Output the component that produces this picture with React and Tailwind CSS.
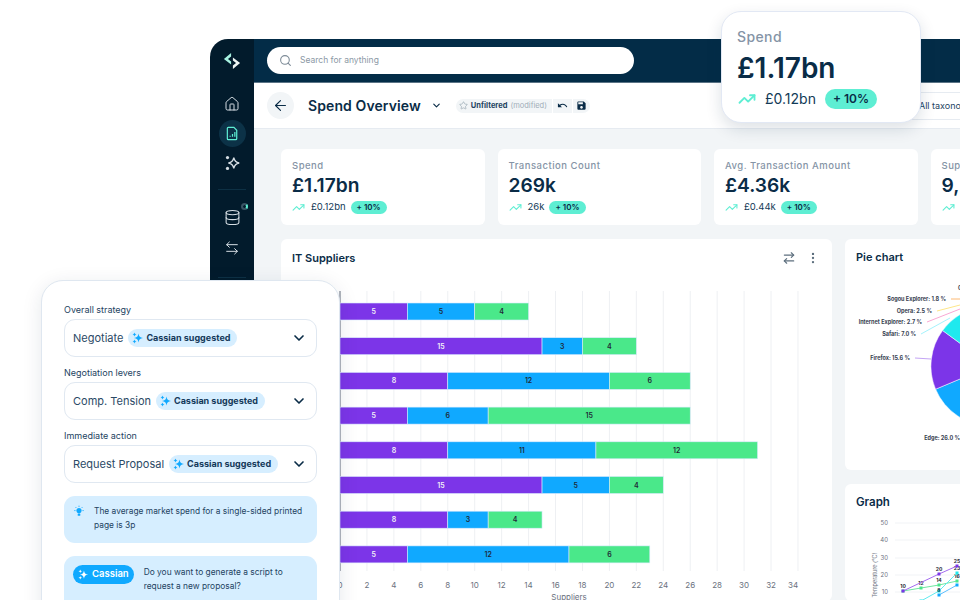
import {
    ArrowLeft,
    ArrowLeftRight,
    ArrowRightLeft,
    ChevronDown,
    Database,
    EllipsisVertical,
    House,
    Search,
    Star,
    TrendingUp,
} from "lucide-react";
import { MdSave, MdUndo } from "react-icons/md";

const stats = [
    { label: "Transaction Count", value: "269k", delta: "26k" },
    { label: "Avg. Transaction Amount", value: "£4.36k", delta: "£0.44k" },
    { label: "Suppliers", value: "9,241", delta: "1.2k" },
];

const bars = [
    [5, 5, 4],
    [15, 3, 4],
    [8, 12, 6],
    [5, 6, 15],
    [8, 11, 12],
    [15, 5, 4],
    [8, 3, 4],
    [5, 12, 6],
];

const barColors = ["#7c35e8", "#10a9ff", "#4ae88a"];
const ticks = [0, 2, 4, 6, 8, 10, 12, 14, 16, 18, 20, 22, 24, 26, 28, 30, 32, 34];

function Sparkles({ className }) {
    return (
        <svg viewBox="0 0 24 24" className={className} fill="currentColor">
            <path d="M13 3c1 6 3 8 9 9-6 1-8 3-9 9-1-6-3-8-9-9 6-1 8-3 9-9z" />
            <path d="M5 1c.6 2.400 1.600 3.400 4 4-2.400.6-3.400 1.600-4 4-.6-2.400-1.600-3.400-4-4 2.400-.6 3.400-1.600 4-4z" />
            <path d="M5 15c.6 2.400 1.600 3.400 4 4-2.400.6-3.400 1.600-4 4-.6-2.400-1.600-3.400-4-4 2.400-.6 3.400-1.600 4-4z" />
        </svg>
    );
}

function OutlineSparkles() {
    return (
        <svg viewBox="0 0 20 20" className="h-[18px] w-[18px] text-[#d5dde3]" fill="currentColor">
            <path
                d="M12 4c.7 4 2 5.300 6 6-4 .7-5.300 2-6 6-.7-4-2-5.300-6-6 4-.7 5.300-2 6-6z"
                fill="none"
                stroke="currentColor"
                strokeWidth="1.500"
            />
            <circle cx="5" cy="4" r="1.800" />
            <circle cx="5" cy="16" r="1.800" />
        </svg>
    );
}

function Logo() {
    return (
        <svg viewBox="0 0 20 20" className="h-[18px] w-[18px]">
            <path d="M9 1v4L5.500 7.800 9 10.500V14L1 7.800z" fill="#a7f3e2" />
            <path d="M11 6l8 6.200-8 6.800v-4l3.500-2.800L11 9.500z" fill="#eef6f4" />
        </svg>
    );
}

function Bulb() {
    return (
        <svg viewBox="0 0 14 14" className="mt-[1px] h-[12px] w-[12px] shrink-0" fill="#10a9ff">
            <circle cx="7" cy="6.500" r="3" />
            <rect x="5.500" y="10" width="3" height="2.500" rx="0.600" />
            <path d="M7 .8v1.400M1.500 6.500h1.400M11.100 6.500h1.400M3 2.500l1 1M11 2.500l-1 1" stroke="#10a9ff" strokeWidth="1" />
        </svg>
    );
}

function StatCard({ label, value, delta }) {
    return (
        <div className="h-[76px] w-[203.5px] shrink-0 rounded-md bg-white px-[11px] pt-[10px]">
            <div className="text-[9.500px] leading-[13px] font-medium tracking-[0.5px] text-[#8594a6]">
                {label}
            </div>
            <div className="text-[19.200px] leading-[27px] font-semibold text-[#0a2c47]">
                {value}
            </div>
            <div className="mt-[1px] flex items-center">
                <TrendingUp className="h-[13px] w-[13px] text-[#5eeed3]" />
                <span className="ml-[6px] text-[9.500px] text-[#123a57]">{delta}</span>
                <span className="ml-[5px] rounded-full bg-[#5eeed3] px-[6px] text-[8px] leading-[13px] font-semibold text-[#0a2c47]">
                    + 10%
                </span>
            </div>
        </div>
    );
}

function Suggested() {
    return (
        <span className="ml-[5px] flex h-[18px] items-center rounded-full bg-[#d6eeff] pl-[4px] pr-[7px]">
            <Sparkles className="h-[12px] w-[12px] text-[#10a9ff]" />
            <span className="ml-[2px] text-[9px] font-bold text-[#14395a]">Cassian suggested</span>
        </span>
    );
}

function Select({ label, value }) {
    return (
        <div className="mb-[9px]">
            <div className="text-[9px] leading-[13px] text-[#23435f]">{label}</div>
            <div className="mt-[3px] flex h-[38px] items-center rounded-[11px] border border-[#e0e8f1] pl-[8px] pr-[9px]">
                <span className="text-[11px] text-[#2b4a66]">{value}</span>
                <Suggested />
                <ChevronDown className="ml-auto h-[16px] w-[16px] text-[#0a2c47]" strokeWidth={2.5} />
            </div>
        </div>
    );
}

function BarChart() {
    return (
        <svg viewBox="281 285 551 315" className="h-[315px] w-[551px]">
            {ticks.map((t) => (
                <line
                    key={t}
                    x1={340 + t * 13.47}
                    x2={340 + t * 13.47}
                    y1="290"
                    y2="570"
                    stroke="#eef0f3"
                />
            ))}
            <line x1="340" x2="340" y1="290" y2="570" stroke="#6b7280" />
            {bars.map((row, i) => {
                let start = 0;
                const y = 302 + i * 34.7;
                return row.map((v, j) => {
                    const x = 340 + start * 13.47;
                    start += v;
                    return (
                        <g key={j}>
                            <rect
                                x={x}
                                y={y}
                                width={v * 13.47}
                                height="17"
                                fill={barColors[j]}
                                stroke="#dbeafe"
                                strokeWidth="0.6"
                            />
                            <text
                                x={x + (v * 13.47) / 2}
                                y={y + 11}
                                textAnchor="middle"
                                fontSize="7"
                                fontWeight="600"
                                fill={j === 0 ? "#f3f4f6" : "#1f2937"}
                            >
                                {v}
                            </text>
                        </g>
                    );
                });
            })}
            {ticks.map((t) => (
                <text
                    key={t}
                    x={t === 34 ? 793 : 340 + t * 13.47}
                    y="587"
                    textAnchor="middle"
                    fontSize="8"
                    fill="#6b7280"
                >
                    {t}
                </text>
            ))}
            <text x="569" y="599" textAnchor="middle" fontSize="8" fill="#6b7280">
                Suppliers
            </text>
        </svg>
    );
}

function PieChart() {
    const labels = [
        ["Sogou Explorer: 1.8 %", 946, 300],
        ["Opera: 2.5 %", 932, 312],
        ["Internet Explorer: 2.7 %", 922, 323],
        ["Safari: 7.0 %", 916, 335],
        ["Firefox: 15.6 %", 910, 359],
        ["Edge: 26.0 %", 960, 439],
    ];
    return (
        <svg viewBox="845 270 300 199" className="h-[199px] w-[300px]">
            <path d="M991 365 L991 425 A60 60 0 0 1 935.600 388.200 Z" fill="#10a9ff" stroke="#fff" strokeWidth="0.5" />
            <path d="M991 365 L935.600 388.200 A60 60 0 0 1 942.600 329.500 Z" fill="#7c35e8" stroke="#fff" strokeWidth="0.5" />
            <path d="M991 365 L942.600 329.500 A60 60 0 0 1 991 305 Z" fill="#1fe9ee" stroke="#fff" strokeWidth="0.5" />
            <path d="M951 298 H960" stroke="#fdba74" fill="none" />
            <path d="M937 310 L960 304" stroke="#fde68a" fill="none" />
            <path d="M927 321 L960 308" stroke="#f9a8d4" fill="none" />
            <path d="M921 333 L950 317" stroke="#a5f3fc" fill="none" />
            <path d="M915 357 L931 358" stroke="#c4a5f5" fill="none" />
            {labels.map(([text, x, y]) => (
                <text key={text} x={x} y={y} textAnchor="end" fontSize="5.500" fontWeight="700" fill="#374151">
                    {text}
                </text>
            ))}
            <text x="958" y="289" fontSize="5.500" fontWeight="700" fill="#374151">
                Other
            </text>
        </svg>
    );
}

function LineChart() {
    const series = [
        { color: "#6ee7a0", fill: "#4ae88a", points: [[903, 590], [921, 587, 12], [939, 584, 14], [957, 580, 16]] },
        { color: "#5eeaf0", fill: "#1fe9ee", points: [[921, 600], [939, 590], [957, 572, 23]] },
        { color: "#5cc0ff", fill: "#10a9ff", points: [[939, 594, 8], [957, 584]] },
        { color: "#a46cf0", fill: "#7c35e8", points: [[903, 590, 10], [939, 573, 20], [957, 565, 25]] },
    ];
    return (
        <svg viewBox="845 515 300 85" className="h-[85px] w-[300px]">
            {[
                ["50", 522],
                ["40", 539],
                ["30", 557],
                ["20", 574],
                ["10", 591],
            ].map(([label, y]) => (
                <g key={label}>
                    <line x1="895" x2="1100" y1={y} y2={y} stroke="#f1f3f6" />
                    <text x="888" y={y + 2} textAnchor="end" fontSize="6" fill="#6b7280">
                        {label}
                    </text>
                </g>
            ))}
            <text
                transform="translate(877 574) rotate(-90)"
                textAnchor="middle"
                fontSize="5.500"
                fill="#6b7280"
            >
                Temperature (°C)
            </text>
            {series.map((s) => (
                <g key={s.fill}>
                    <polyline
                        points={s.points.map((p) => `${p[0]},${p[1]}`).join(" ")}
                        fill="none"
                        stroke={s.color}
                        strokeWidth="1"
                    />
                    {s.points.map((p) => (
                        <g key={p[0]}>
                            <rect x={p[0] - 1.5} y={p[1] - 1.5} width="3" height="3" fill={s.fill} />
                            {p[2] && (
                                <text x={p[0]} y={p[1] - 3.500} textAnchor="middle" fontSize="5" fontWeight="700" fill="#1f2937">
                                    {p[2]}
                                </text>
                            )}
                        </g>
                    ))}
                </g>
            ))}
        </svg>
    );
}

export default function App() {
    return (
        <div className="relative h-[600px] w-[960px] overflow-hidden bg-white font-['Inter',sans-serif]">
            {/* DASHBOARD WINDOW */}
            <div className="absolute top-[39px] left-[210px] flex h-[620px] w-[1050px] overflow-hidden rounded-tl-[18px]">
                <aside className="flex w-[44px] shrink-0 flex-col items-center bg-[#021b2c] pt-[13px] text-[#d5dde3]">
                    <Logo />
                    <House className="mt-[26px] h-[16px] w-[16px]" strokeWidth={1.5} />
                    <div className="mt-[8px] flex h-[27px] w-[27px] items-center justify-center rounded-full bg-[#0c3247]">
                        <svg viewBox="0 0 16 16" className="h-[15px] w-[15px]" fill="none" stroke="#5eeed3" strokeWidth="1.300">
                            <path d="M3.500 1.500h6l3 3v9a1 1 0 0 1-1 1h-8a1 1 0 0 1-1-1v-11a1 1 0 0 1 1-1z" />
                            <path d="M5.500 11.500v-1M8 11.500v-3M10.500 11.500v-5" />
                        </svg>
                    </div>
                    <div className="mt-[7px]">
                        <OutlineSparkles />
                    </div>
                    <div className="mt-[17px] h-px w-[28px] bg-[#0d3044]" />
                    <div className="relative mt-[19px]">
                        <Database className="h-[17px] w-[17px]" strokeWidth={1.5} />
                        <span className="absolute -top-[6px] -right-[7px] h-[7px] w-[7px] rounded-full border-2 border-[#3a5565] border-r-[#5eeed3]" />
                    </div>
                    <ArrowLeftRight className="mt-[14px] h-[16px] w-[16px]" strokeWidth={1.5} />
                    <div className="mt-[21px] h-px w-[28px] bg-[#0d3044]" />
                </aside>

                <main className="flex min-w-0 flex-1 flex-col bg-[#f2f5f7]">
                    {/* SEARCH BAR */}
                    <div className="flex h-[44px] shrink-0 items-center border-b border-[#5b7486] bg-[#032c47] pl-[13px]">
                        <div className="flex h-[27px] w-[367px] items-center rounded-full bg-white pl-[12px]">
                            <Search className="h-[13px] w-[13px] text-[#7d8b97]" />
                            <span className="ml-[8px] text-[8.500px] text-[#8b98a5]">Search for anything</span>
                        </div>
                    </div>

                    {/* TITLE ROW */}
                    <div className="flex h-[46px] shrink-0 items-center border-b border-[#e6ebf1] bg-white pl-[13px]">
                        <div className="flex h-[27px] w-[27px] items-center justify-center rounded-full bg-[#f2f5f7]">
                            <ArrowLeft className="h-[17px] w-[17px] text-[#0a2c47]" strokeWidth={1.6} />
                        </div>
                        <span className="ml-[14px] text-[14px] font-semibold tracking-[0.1px] text-[#0a2c47]">Spend Overview</span>
                        <ChevronDown className="ml-[10px] h-[11px] w-[11px] text-[#0a2c47]" strokeWidth={2.5} />
                        <div className="ml-[14px] flex h-[14px] items-center rounded-full bg-[#f2f5f7] pl-[3px] pr-[3px]">
                            <Star className="h-[9px] w-[9px] text-[#a0adb8]" />
                            <span className="ml-[3px] text-[7.500px] font-bold text-[#23435f]">Unfiltered</span>
                            <span className="ml-[3px] text-[7.500px] text-[#a0adb8]">(modified)</span>
                            <span className="ml-[5px] h-[14px] w-px bg-white" />
                            <MdUndo className="mx-[4px] h-[11px] w-[11px] text-[#0a2c47]" />
                            <span className="h-[14px] w-px bg-white" />
                            <MdSave className="ml-[3px] h-[11px] w-[11px] text-[#0a2c47]" />
                        </div>
                        <div className="ml-[314px] flex h-[28px] w-[120px] items-center rounded-md border border-[#e6ebf1] pl-[14px] text-[9px] text-[#23435f]">
                            All taxonomy
                        </div>
                    </div>

                    {/* CONTENT */}
                    <div className="pt-[20px] pl-[27px]">
                        <div className="flex gap-[13px]">
                            <StatCard label="Spend" value="£1.17bn" delta="£0.12bn" />
                            {stats.map((stat) => (
                                <StatCard key={stat.label} {...stat} />
                            ))}
                        </div>

                        <div className="mt-[14px] flex gap-[13px]">
                            <section className="w-[551px] shrink-0 rounded-md bg-white">
                                <div className="flex h-[47px] items-start pt-[12px] pl-[11px] pr-[12px]">
                                    <h2 className="text-[11px] leading-[14px] font-semibold text-[#0a2c47]">IT Suppliers</h2>
                                    <ArrowRightLeft className="ml-auto h-[14px] w-[14px] text-[#5d6f7e]" />
                                    <EllipsisVertical className="ml-[10px] h-[14px] w-[14px] text-[#5d6f7e]" />
                                </div>
                                <BarChart />
                            </section>

                            <div className="flex w-[300px] shrink-0 flex-col gap-[14px]">
                                <section className="h-[231px] rounded-md bg-white">
                                    <h2 className="h-[32px] pt-[11px] pl-[11px] text-[11px] leading-[14px] font-semibold text-[#0a2c47]">
                                        Pie chart
                                    </h2>
                                    <PieChart />
                                </section>
                                <section className="rounded-md bg-white">
                                    <h2 className="h-[32px] pt-[10px] pl-[11px] text-[11.500px] leading-[16px] font-semibold text-[#0a2c47]">
                                        Graph
                                    </h2>
                                    <LineChart />
                                </section>
                            </div>
                        </div>
                    </div>
                </main>
            </div>

            {/* FLOATING SPEND CARD */}
            <div className="absolute top-[11px] left-[721px] h-[112px] w-[200px] rounded-[20px] border border-[#e2e8f4] bg-white pt-[15px] pl-[15px] shadow-[0_6px_16px_rgba(15,40,70,0.14)]">
                <div className="text-[14px] leading-[20px] font-medium tracking-[0.4px] text-[#8594a6]">Spend</div>
                <div className="mt-[3px] text-[28px] leading-[36px] font-semibold text-[#0a2c47]">£1.17bn</div>
                <div className="mt-[2px] flex items-center">
                    <TrendingUp className="ml-[1px] h-[18px] w-[18px] text-[#5eeed3]" strokeWidth={2.5} />
                    <span className="ml-[9px] text-[14px] text-[#123a57]">£0.12bn</span>
                    <span className="ml-[9px] rounded-full bg-[#5eeed3] px-[8px] text-[12px] leading-[20px] font-semibold text-[#0a2c47]">
                        + 10%
                    </span>
                </div>
            </div>

            {/* FLOATING STRATEGY PANEL */}
            <div className="absolute top-[280px] left-[41px] h-[360px] w-[299px] rounded-[22px] border border-[#dfe7f0] bg-white px-[22px] pt-[22px] shadow-[0_4px_20px_rgba(15,40,70,0.1)]">
                <Select label="Overall strategy" value="Negotiate" />
                <Select label="Negotiation levers" value="Comp. Tension" />
                <Select label="Immediate action" value="Request Proposal" />

                <div className="mt-[13px] flex h-[47px] rounded-[11px] bg-[#d6eeff] pt-[8px] pl-[9px] pr-[6px]">
                    <Bulb />
                    <p className="ml-[9px] text-[8.400px] leading-[14px] text-[#23435f]">
                        The average market spend for a single-sided printed page is 3p
                    </p>
                </div>

                <div className="mt-[13px] flex h-[70px] rounded-[11px] bg-[#d6eeff] pt-[9px] pl-[9px] pr-[10px]">
                    <span className="flex h-[19px] shrink-0 items-center rounded-full bg-[#10a9ff] px-[5px]">
                        <Sparkles className="h-[11px] w-[11px] text-white" />
                        <span className="ml-[3px] text-[9.500px] font-semibold text-white">Cassian</span>
                    </span>
                    <p className="ml-[10px] text-[8.400px] leading-[14px] text-[#23435f]">
                        Do you want to generate a script to request a new proposal?
                    </p>
                </div>
            </div>
        </div>
    );
}
